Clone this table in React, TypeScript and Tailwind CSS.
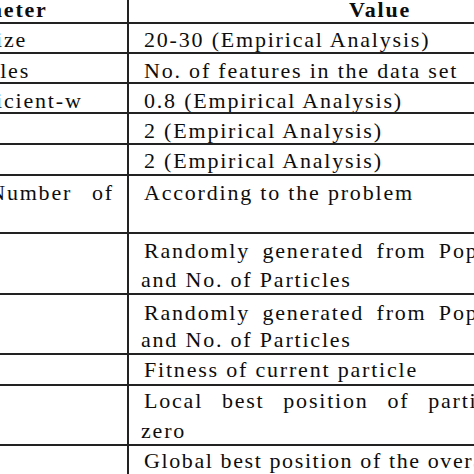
import React from "react";

type Row = {
  h: string;
  pt: string;
  left: string[];
  right: string[];
  gap?: string;
  spread?: string;
};

const rows: Row[] = [
  { h: "h-[30px]", pt: "pt-[2px]", left: ["Population size"], right: ["20-30 (Empirical Analysis)"] },
  { h: "h-[30px]", pt: "pt-[3px]", left: ["No. of particles"], right: ["No. of features in the data set"] },
  { h: "h-[30px]", pt: "pt-[3px]", left: ["Inertia coefficient-w"], right: ["0.8 (Empirical Analysis)"] },
  { h: "h-[31px]", pt: "pt-[3px]", left: ["c1"], right: ["2 (Empirical Analysis)"] },
  { h: "h-[31px]", pt: "pt-[2px]", left: ["c2"], right: ["2 (Empirical Analysis)"] },
  { h: "h-[58px]", pt: "pt-[3px]", left: ["Maximum Number of", "iterations"], right: ["According to the problem"] },
  {
    h: "h-[61px]",
    pt: "pt-[3px]",
    left: ["Position"],
    right: ["Randomly generated from Population size", "and No. of Particles"],
    gap: "mt-[1px]",
  },
  {
    h: "h-[60px]",
    pt: "pt-[4px]",
    left: ["Velocity"],
    right: ["Randomly generated from Population size", "and No. of Particles"],
    gap: "mt-[-1px]",
  },
  { h: "h-[31px]", pt: "pt-[1px]", left: ["Fitness"], right: ["Fitness of current particle"] },
  {
    h: "h-[60px]",
    pt: "pt-[1px]",
    left: ["pbest"],
    right: ["Local best position of particle is set to", "zero"],
    gap: "mt-[2px]",
    spread: "whitespace-nowrap [word-spacing:11.5px]",
  },
  {
    h: "h-[60px]",
    pt: "pt-[1px]",
    left: ["gbest"],
    right: ["Global best position of the overall swarm"],
    spread: "whitespace-nowrap tracking-[1.6px]",
  },
];

function Lines({
  lines,
  gap,
  indent,
  spread,
}: {
  lines: string[];
  gap?: string;
  indent?: boolean;
  spread?: string;
}) {
  const ind = indent ? "indent-[3px]" : "";
  if (lines.length === 1) {
    return <div className={`${ind} ${spread ?? ""}`}>{lines[0]}</div>;
  }
  return (
    <>
      <div className={`${ind} ${spread ?? "text-justify [text-align-last:justify]"}`}>{lines[0]}</div>
      {lines.slice(1).map((l) => (
        <div key={l} className={gap ?? ""}>
          {l}
        </div>
      ))}
    </>
  );
}

export default function App() {
  return (
    <div className="w-[474px] h-[474px] overflow-hidden bg-white">
      <div className="mt-[-8px] ml-[-148px] w-[779px] [font-family:'Liberation_Serif',serif] text-[22px] leading-[28px] tracking-[1.8px] text-[#0d0d0d]">
        <div className="flex h-[30px]">
          <div className="w-[277px] shrink-0 border-r-2 border-[#222] pt-[4px] text-center font-bold">
            Parameter
          </div>
          <div className="flex-1 pt-[4px] text-center font-bold">Value</div>
        </div>
        {rows.map((r, i) => (
          <div key={i} className={`flex border-t-2 border-[#222] ${r.h}`}>
            <div className={`w-[277px] shrink-0 border-r-2 border-[#222] pl-[13px] pr-[13px] ${r.pt}`}>
              <Lines lines={r.left} />
            </div>
            <div className={`flex-1 overflow-hidden pl-[12px] pr-[25px] ${r.pt}`}>
              <Lines lines={r.right} gap={r.gap} indent spread={r.spread} />
            </div>
          </div>
        ))}
      </div>
    </div>
  );
}
